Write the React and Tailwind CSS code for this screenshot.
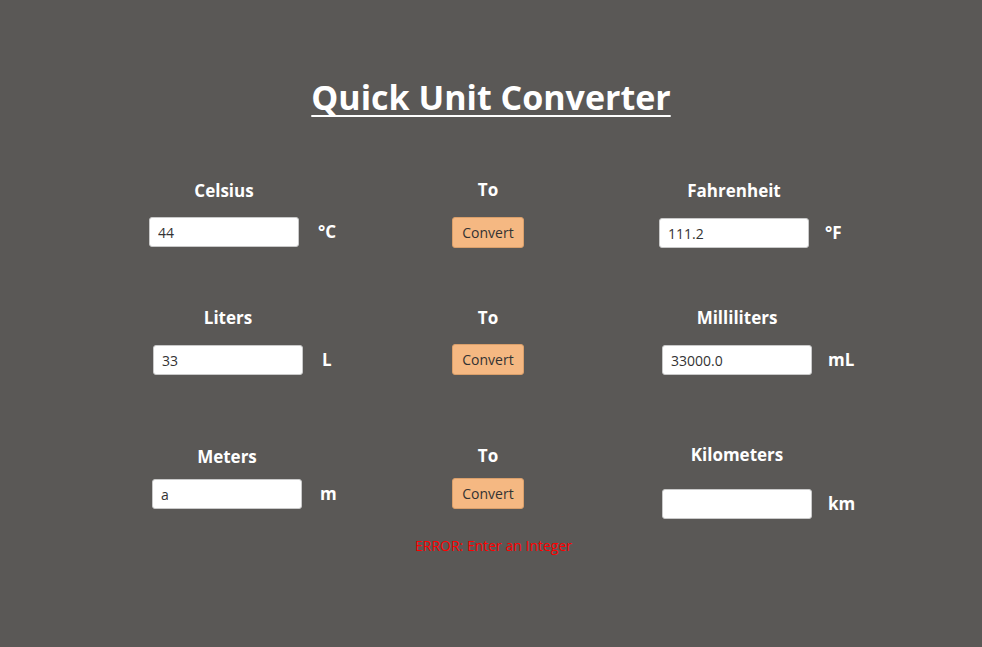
import React, { useState } from "react";

function UnitField({ label, value, unit, className = "", gapClass = "", unitGap = "" }) {
  return (
    <div className={`grid grid-cols-[150px_auto] items-center ${gapClass} ${unitGap} ${className}`}>
      <div className="text-center text-[17px] font-bold leading-[22px] text-white">{label}</div>
      <div />
      <input
        type="text"
        defaultValue={value}
        className="h-[30px] w-[150px] rounded-[3px] border border-[#c9c9c9] bg-white px-[8px] text-[14px] text-[#333] outline-none"
      />
      <span className="text-[17px] font-bold leading-[22px] text-white">{unit}</span>
    </div>
  );
}

function ToButton({ className = "", gapClass = "" }) {
  return (
    <div className={`flex flex-col items-center ${gapClass} ${className}`}>
      <div className="text-[17px] font-bold leading-[22px] text-white">To</div>
      <button className="h-[31px] w-[72px] rounded-[3px] border border-[#d99f6b] bg-[#f5b882] text-[14px] text-[#333]">
        Convert
      </button>
    </div>
  );
}

export default function App() {
  const [error] = useState("ERROR: Enter an Integer");

  return (
    <div className="min-h-screen w-full bg-[#5a5856] font-['Open_Sans','Noto_Sans',sans-serif]">
      <div className="flex flex-col pt-[75px]">
        {/* title */}
        <div className="flex justify-center">
          <h1 className="text-[34px] font-bold leading-[44px] text-white underline decoration-2 underline-offset-[5px] [text-decoration-skip-ink:none]">
            Quick Unit Converter
          </h1>
        </div>

        {/* celsius / fahrenheit */}
        <div className="mt-[61px] grid grid-cols-[390px_196px_396px] items-start">
          <UnitField label="Celsius" value="44" unit="°C" className="ml-[149px]" gapClass="gap-y-[15px]" unitGap="gap-x-[19px]" />
          <ToButton className="-mt-[1px]" gapClass="gap-y-[16px]" />
          <UnitField label="Fahrenheit" value="111.2" unit="°F" className="ml-[73px]" gapClass="gap-y-[16px]" unitGap="gap-x-[16px]" />
        </div>

        {/* liters / milliliters */}
        <div className="mt-[59px] grid grid-cols-[390px_196px_396px] items-start">
          <UnitField label="Liters" value="33" unit="L" className="ml-[153px]" gapClass="gap-y-[16px]" unitGap="gap-x-[19px]" />
          <ToButton gapClass="gap-y-[15px]" />
          <UnitField label="Milliliters" value="33000.0" unit="mL" className="ml-[76px]" gapClass="gap-y-[16px]" unitGap="gap-x-[16px]" />
        </div>

        {/* meters / kilometers */}
        <div className="mt-[69px] grid grid-cols-[390px_196px_396px] items-start">
          <UnitField label="Meters" value="a" unit="m" className="ml-[152px] mt-[2px]" gapClass="gap-y-[11px]" unitGap="gap-x-[18px]" />
          <ToButton className="mt-[1px]" gapClass="gap-y-[11px]" />
          <UnitField label="Kilometers" value="" unit="km" className="ml-[76px]" gapClass="gap-y-[23px]" unitGap="gap-x-[16px]" />
        </div>

        <div className="mt-[17px] flex justify-center pl-[5px]">
          <span className="text-[14px] leading-[20px] text-[#ff0000]">{error}</span>
        </div>
      </div>
    </div>
  );
}
